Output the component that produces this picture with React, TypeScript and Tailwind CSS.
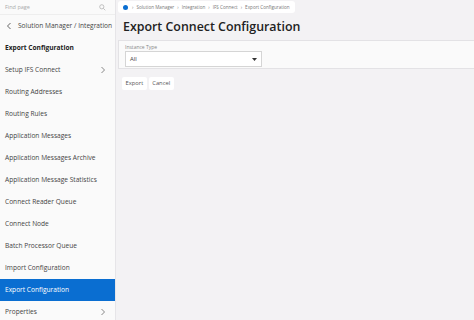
import React from 'react';

const items = [
  { label: 'Setup IFS Connect', arrow: true },
  { label: 'Routing Addresses' },
  { label: 'Routing Rules' },
  { label: 'Application Messages' },
  { label: 'Application Messages Archive' },
  { label: 'Application Message Statistics' },
  { label: 'Connect Reader Queue' },
  { label: 'Connect Node' },
  { label: 'Batch Processor Queue' },
  { label: 'Import Configuration' },
  { label: 'Export Configuration', active: true },
  { label: 'Properties', arrow: true },
];

const Chevron: React.FC<{ dir?: 'left' | 'right'; className?: string }> = ({ dir = 'right', className }) => (
  <svg width="6" height="8" viewBox="0 0 6 8" className={className} fill="none" stroke="currentColor" strokeWidth="1">
    {dir === 'right' ? <path d="M1.5 1l3 3-3 3" /> : <path d="M4.5 1l-3 3 3 3" />}
  </svg>
);

const App: React.FC = () => {
  return (
    <div className="flex w-[474px] h-[320px] overflow-hidden bg-[#f3f2f4] text-[#333]" style={{ fontFamily: '"Open Sans", sans-serif' }}>
      {/* Sidebar */}
      <aside className="w-[116px] shrink-0 bg-[#fafafa] border-r border-[#e6e5e8] flex flex-col">
        <div className="h-[15px] shrink-0 flex items-center justify-between px-[5px] border-b border-[#eee]">
          <span className="text-[5.5px] text-[#aaa]">Find page</span>
          <svg width="7" height="7" viewBox="0 0 10 10" fill="none" stroke="#aaa" strokeWidth="1" className="mr-[4px]">
            <circle cx="4" cy="4" r="3" />
            <path d="M6.3 6.3L9 9" />
          </svg>
        </div>
        <div className="h-[22px] shrink-0 flex items-center gap-[6px] pl-[6px] text-[6.6px] text-[#444] whitespace-nowrap">
          <Chevron dir="left" className="text-[#666]" />
          <span>Solution Manager / Integration</span>
        </div>
        <div className="h-[22px] shrink-0 flex items-center px-[5px] text-[6.6px] font-bold text-[#222]">Export Configuration</div>
        {items.map(it => (
          <div
            key={it.label}
            className={`h-[22px] shrink-0 flex items-center justify-between px-[5px] text-[6.6px] whitespace-nowrap ${it.active ? 'bg-[#0a6ed1] text-white' : 'text-[#444]'}`}
          >
            <span>{it.label}</span>
            {it.arrow && <Chevron className="mr-[4px] text-[#888]" />}
          </div>
        ))}
      </aside>

      {/* Main */}
      <main className="flex-1 flex flex-col">
        <div className="flex pt-[1px] pl-[2px]">
          <div className="flex items-center h-[12px] px-[5px] gap-[3px] bg-white rounded-[3px] text-[4.6px] text-[#777] whitespace-nowrap">
            <span className="w-[5px] h-[5px] rounded-full bg-[#0a6ed1] mr-[1px]" />
            <span>›</span><span>Solution Manager</span>
            <span>›</span><span>Integration</span>
            <span>›</span><span>IFS Connect</span>
            <span>›</span><span>Export Configuration</span>
          </div>
        </div>
        <h1 className="pl-[7px] mt-[4px] text-[12.4px] font-semibold text-[#222] leading-[20px] whitespace-nowrap">Export Connect Configuration</h1>
        <div className="mt-[3px] ml-[2px] bg-[#fafafa] border-y border-l border-[#e3e2e5] h-[29px] px-[6px] pt-[3px]">
          <div className="text-[5px] text-[#888] leading-[7px]">Instance Type</div>
          <div className="w-[137px] h-[16px] bg-white border border-[#d5d5d5] flex items-center justify-between px-[4px]">
            <span className="text-[6px] text-[#444]">All</span>
            <svg width="5" height="3" viewBox="0 0 5 3"><path d="M0 0h5L2.5 3z" fill="#333" /></svg>
          </div>
        </div>
        <div className="flex gap-[2px] mt-[8px] pl-[6px]">
          <button className="h-[13px] px-[3.5px] bg-white rounded-[2px] text-[5.8px] text-[#555]">Export</button>
          <button className="h-[13px] px-[3.5px] bg-white rounded-[2px] text-[5.8px] text-[#555]">Cancel</button>
        </div>
      </main>
    </div>
  );
};

export default App;
